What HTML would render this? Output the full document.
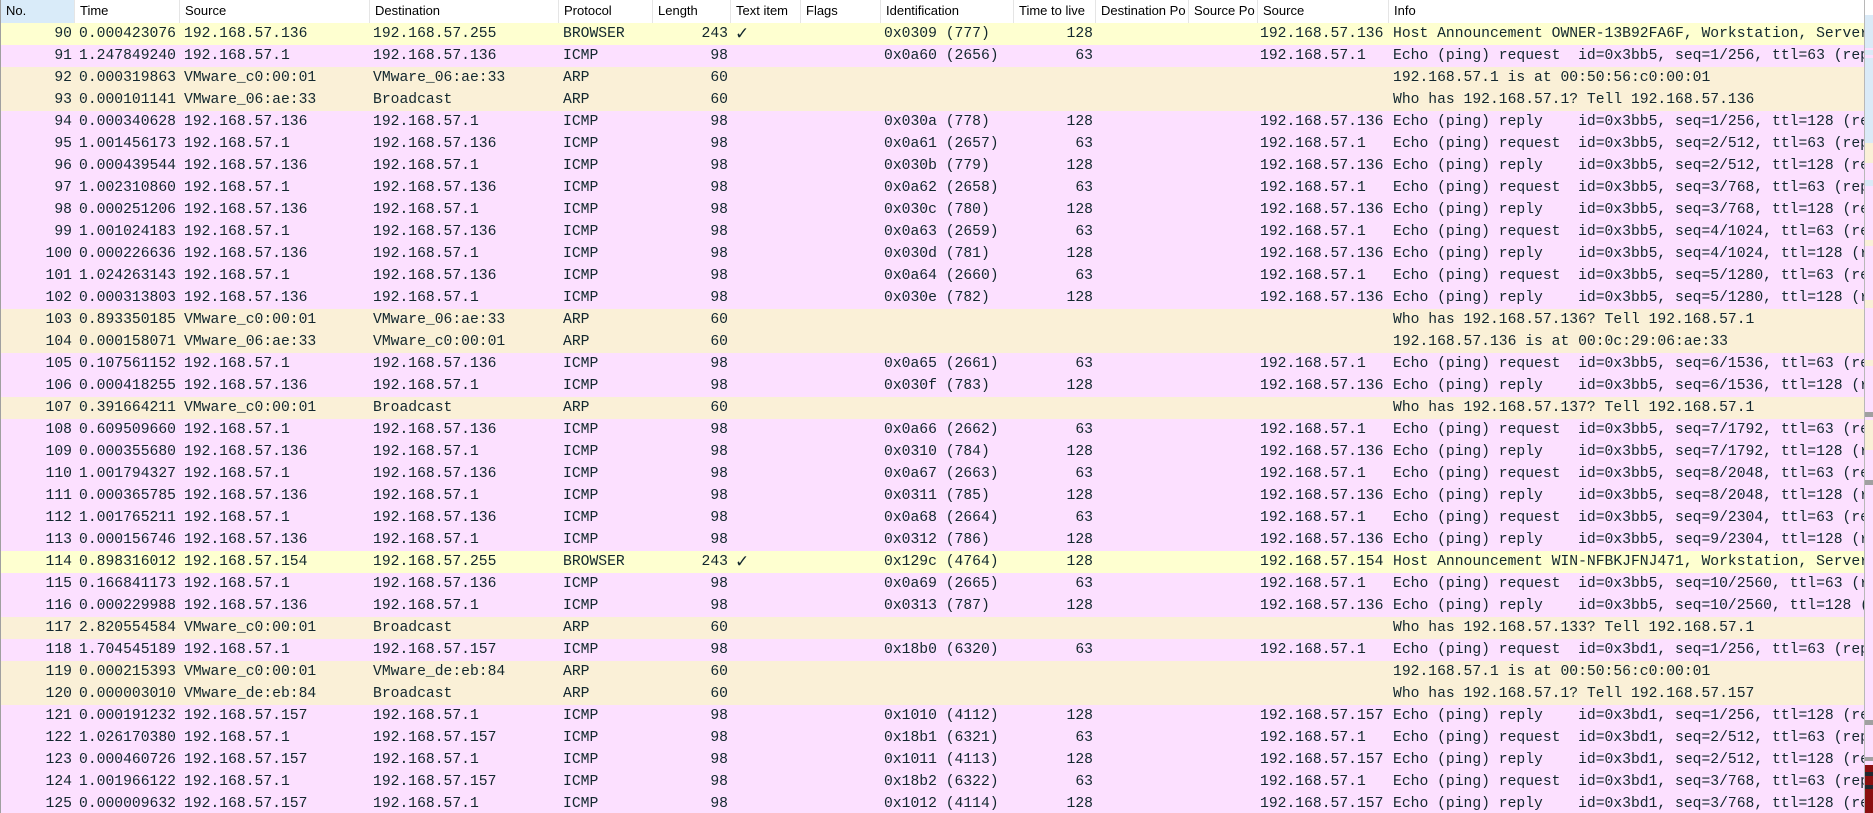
<!DOCTYPE html>
<html><head><meta charset="utf-8">
<style>
*{margin:0;padding:0;box-sizing:border-box}
body{width:1873px;height:813px;overflow:hidden;background:#fff;position:relative}
#list{position:absolute;left:0;top:0;width:1864px;height:813px;overflow:hidden;border-left:1px solid #a0a0a0}
.hd{position:absolute;left:0;top:0;height:23px;width:1873px;background:#fff;font-family:"Liberation Sans",sans-serif;font-size:13px;color:#000}
.hd span{position:absolute;top:0;height:23px;line-height:22px;padding-left:5px;border-left:1px solid #e5e5e5;white-space:nowrap;overflow:hidden}
.r{position:absolute;left:0;width:1864px;height:22px;font-family:"Liberation Mono",monospace;font-size:14.7px;line-height:22px;color:#12272e;white-space:pre}
.r span{position:absolute;top:0}
.Y{background:#feffd0}.I{background:#fce0ff}.A{background:#faf0d7}
.n{left:0;width:71px;text-align:right}
.t{left:78px}.s{left:183px}.d{left:372px}.p{left:562px}
.l{left:651px;width:76px;text-align:right}
.r .x{left:734px;font-family:"DejaVu Sans",sans-serif;font-size:17px}
.id{left:883px}
.tt{left:1012px;width:80px;text-align:right}
.s2{left:1259px}.in{left:1392px}
#sb{position:absolute;left:1864px;top:0;width:9px;height:813px;border-left:1px solid #b8b8b8;background:#fce0ff}
#sb div{position:absolute;left:0;width:8px}
</style></head><body>
<div id="list">
<div class="hd">
<span style="left:0;width:73px;background:#d9ebf9;border-left:none">No.</span>
<span style="left:73px;width:105px">Time</span>
<span style="left:178px;width:190px">Source</span>
<span style="left:368px;width:189px">Destination</span>
<span style="left:557px;width:94px">Protocol</span>
<span style="left:651px;width:78px">Length</span>
<span style="left:729px;width:70px">Text item</span>
<span style="left:799px;width:80px">Flags</span>
<span style="left:879px;width:133px">Identification</span>
<span style="left:1012px;width:82px">Time to live</span>
<span style="left:1094px;width:93px">Destination Po</span>
<span style="left:1187px;width:69px">Source Po</span>
<span style="left:1256px;width:131px">Source</span>
<span style="left:1387px;width:480px">Info</span>
</div>

<div class="r Y" style="top:23px"><span class="n">90</span><span class="t">0.000423076</span><span class="s">192.168.57.136</span><span class="d">192.168.57.255</span><span class="p">BROWSER</span><span class="l">243</span><span class="x">✓</span><span class="id">0x0309 (777)</span><span class="tt">128</span><span class="s2">192.168.57.136</span><span class="in">Host Announcement OWNER-13B92FA6F, Workstation, Server, Print Queue</span></div>
<div class="r I" style="top:45px"><span class="n">91</span><span class="t">1.247849240</span><span class="s">192.168.57.1</span><span class="d">192.168.57.136</span><span class="p">ICMP</span><span class="l">98</span><span class="id">0x0a60 (2656)</span><span class="tt">63</span><span class="s2">192.168.57.1</span><span class="in">Echo (ping) request  id=0x3bb5, seq=1/256, ttl=63 (reply in 94)</span></div>
<div class="r A" style="top:67px"><span class="n">92</span><span class="t">0.000319863</span><span class="s">VMware_c0:00:01</span><span class="d">VMware_06:ae:33</span><span class="p">ARP</span><span class="l">60</span><span class="in">192.168.57.1 is at 00:50:56:c0:00:01</span></div>
<div class="r A" style="top:89px"><span class="n">93</span><span class="t">0.000101141</span><span class="s">VMware_06:ae:33</span><span class="d">Broadcast</span><span class="p">ARP</span><span class="l">60</span><span class="in">Who has 192.168.57.1? Tell 192.168.57.136</span></div>
<div class="r I" style="top:111px"><span class="n">94</span><span class="t">0.000340628</span><span class="s">192.168.57.136</span><span class="d">192.168.57.1</span><span class="p">ICMP</span><span class="l">98</span><span class="id">0x030a (778)</span><span class="tt">128</span><span class="s2">192.168.57.136</span><span class="in">Echo (ping) reply    id=0x3bb5, seq=1/256, ttl=128 (request in 91)</span></div>
<div class="r I" style="top:133px"><span class="n">95</span><span class="t">1.001456173</span><span class="s">192.168.57.1</span><span class="d">192.168.57.136</span><span class="p">ICMP</span><span class="l">98</span><span class="id">0x0a61 (2657)</span><span class="tt">63</span><span class="s2">192.168.57.1</span><span class="in">Echo (ping) request  id=0x3bb5, seq=2/512, ttl=63 (reply in 96)</span></div>
<div class="r I" style="top:155px"><span class="n">96</span><span class="t">0.000439544</span><span class="s">192.168.57.136</span><span class="d">192.168.57.1</span><span class="p">ICMP</span><span class="l">98</span><span class="id">0x030b (779)</span><span class="tt">128</span><span class="s2">192.168.57.136</span><span class="in">Echo (ping) reply    id=0x3bb5, seq=2/512, ttl=128 (request in 95)</span></div>
<div class="r I" style="top:177px"><span class="n">97</span><span class="t">1.002310860</span><span class="s">192.168.57.1</span><span class="d">192.168.57.136</span><span class="p">ICMP</span><span class="l">98</span><span class="id">0x0a62 (2658)</span><span class="tt">63</span><span class="s2">192.168.57.1</span><span class="in">Echo (ping) request  id=0x3bb5, seq=3/768, ttl=63 (reply in 98)</span></div>
<div class="r I" style="top:199px"><span class="n">98</span><span class="t">0.000251206</span><span class="s">192.168.57.136</span><span class="d">192.168.57.1</span><span class="p">ICMP</span><span class="l">98</span><span class="id">0x030c (780)</span><span class="tt">128</span><span class="s2">192.168.57.136</span><span class="in">Echo (ping) reply    id=0x3bb5, seq=3/768, ttl=128 (request in 97)</span></div>
<div class="r I" style="top:221px"><span class="n">99</span><span class="t">1.001024183</span><span class="s">192.168.57.1</span><span class="d">192.168.57.136</span><span class="p">ICMP</span><span class="l">98</span><span class="id">0x0a63 (2659)</span><span class="tt">63</span><span class="s2">192.168.57.1</span><span class="in">Echo (ping) request  id=0x3bb5, seq=4/1024, ttl=63 (reply in 100)</span></div>
<div class="r I" style="top:243px"><span class="n">100</span><span class="t">0.000226636</span><span class="s">192.168.57.136</span><span class="d">192.168.57.1</span><span class="p">ICMP</span><span class="l">98</span><span class="id">0x030d (781)</span><span class="tt">128</span><span class="s2">192.168.57.136</span><span class="in">Echo (ping) reply    id=0x3bb5, seq=4/1024, ttl=128 (request in 99)</span></div>
<div class="r I" style="top:265px"><span class="n">101</span><span class="t">1.024263143</span><span class="s">192.168.57.1</span><span class="d">192.168.57.136</span><span class="p">ICMP</span><span class="l">98</span><span class="id">0x0a64 (2660)</span><span class="tt">63</span><span class="s2">192.168.57.1</span><span class="in">Echo (ping) request  id=0x3bb5, seq=5/1280, ttl=63 (reply in 102)</span></div>
<div class="r I" style="top:287px"><span class="n">102</span><span class="t">0.000313803</span><span class="s">192.168.57.136</span><span class="d">192.168.57.1</span><span class="p">ICMP</span><span class="l">98</span><span class="id">0x030e (782)</span><span class="tt">128</span><span class="s2">192.168.57.136</span><span class="in">Echo (ping) reply    id=0x3bb5, seq=5/1280, ttl=128 (request in 101)</span></div>
<div class="r A" style="top:309px"><span class="n">103</span><span class="t">0.893350185</span><span class="s">VMware_c0:00:01</span><span class="d">VMware_06:ae:33</span><span class="p">ARP</span><span class="l">60</span><span class="in">Who has 192.168.57.136? Tell 192.168.57.1</span></div>
<div class="r A" style="top:331px"><span class="n">104</span><span class="t">0.000158071</span><span class="s">VMware_06:ae:33</span><span class="d">VMware_c0:00:01</span><span class="p">ARP</span><span class="l">60</span><span class="in">192.168.57.136 is at 00:0c:29:06:ae:33</span></div>
<div class="r I" style="top:353px"><span class="n">105</span><span class="t">0.107561152</span><span class="s">192.168.57.1</span><span class="d">192.168.57.136</span><span class="p">ICMP</span><span class="l">98</span><span class="id">0x0a65 (2661)</span><span class="tt">63</span><span class="s2">192.168.57.1</span><span class="in">Echo (ping) request  id=0x3bb5, seq=6/1536, ttl=63 (reply in 106)</span></div>
<div class="r I" style="top:375px"><span class="n">106</span><span class="t">0.000418255</span><span class="s">192.168.57.136</span><span class="d">192.168.57.1</span><span class="p">ICMP</span><span class="l">98</span><span class="id">0x030f (783)</span><span class="tt">128</span><span class="s2">192.168.57.136</span><span class="in">Echo (ping) reply    id=0x3bb5, seq=6/1536, ttl=128 (request in 105)</span></div>
<div class="r A" style="top:397px"><span class="n">107</span><span class="t">0.391664211</span><span class="s">VMware_c0:00:01</span><span class="d">Broadcast</span><span class="p">ARP</span><span class="l">60</span><span class="in">Who has 192.168.57.137? Tell 192.168.57.1</span></div>
<div class="r I" style="top:419px"><span class="n">108</span><span class="t">0.609509660</span><span class="s">192.168.57.1</span><span class="d">192.168.57.136</span><span class="p">ICMP</span><span class="l">98</span><span class="id">0x0a66 (2662)</span><span class="tt">63</span><span class="s2">192.168.57.1</span><span class="in">Echo (ping) request  id=0x3bb5, seq=7/1792, ttl=63 (reply in 109)</span></div>
<div class="r I" style="top:441px"><span class="n">109</span><span class="t">0.000355680</span><span class="s">192.168.57.136</span><span class="d">192.168.57.1</span><span class="p">ICMP</span><span class="l">98</span><span class="id">0x0310 (784)</span><span class="tt">128</span><span class="s2">192.168.57.136</span><span class="in">Echo (ping) reply    id=0x3bb5, seq=7/1792, ttl=128 (request in 108)</span></div>
<div class="r I" style="top:463px"><span class="n">110</span><span class="t">1.001794327</span><span class="s">192.168.57.1</span><span class="d">192.168.57.136</span><span class="p">ICMP</span><span class="l">98</span><span class="id">0x0a67 (2663)</span><span class="tt">63</span><span class="s2">192.168.57.1</span><span class="in">Echo (ping) request  id=0x3bb5, seq=8/2048, ttl=63 (reply in 111)</span></div>
<div class="r I" style="top:485px"><span class="n">111</span><span class="t">0.000365785</span><span class="s">192.168.57.136</span><span class="d">192.168.57.1</span><span class="p">ICMP</span><span class="l">98</span><span class="id">0x0311 (785)</span><span class="tt">128</span><span class="s2">192.168.57.136</span><span class="in">Echo (ping) reply    id=0x3bb5, seq=8/2048, ttl=128 (request in 110)</span></div>
<div class="r I" style="top:507px"><span class="n">112</span><span class="t">1.001765211</span><span class="s">192.168.57.1</span><span class="d">192.168.57.136</span><span class="p">ICMP</span><span class="l">98</span><span class="id">0x0a68 (2664)</span><span class="tt">63</span><span class="s2">192.168.57.1</span><span class="in">Echo (ping) request  id=0x3bb5, seq=9/2304, ttl=63 (reply in 113)</span></div>
<div class="r I" style="top:529px"><span class="n">113</span><span class="t">0.000156746</span><span class="s">192.168.57.136</span><span class="d">192.168.57.1</span><span class="p">ICMP</span><span class="l">98</span><span class="id">0x0312 (786)</span><span class="tt">128</span><span class="s2">192.168.57.136</span><span class="in">Echo (ping) reply    id=0x3bb5, seq=9/2304, ttl=128 (request in 112)</span></div>
<div class="r Y" style="top:551px"><span class="n">114</span><span class="t">0.898316012</span><span class="s">192.168.57.154</span><span class="d">192.168.57.255</span><span class="p">BROWSER</span><span class="l">243</span><span class="x">✓</span><span class="id">0x129c (4764)</span><span class="tt">128</span><span class="s2">192.168.57.154</span><span class="in">Host Announcement WIN-NFBKJFNJ471, Workstation, Server, NT Workstation</span></div>
<div class="r I" style="top:573px"><span class="n">115</span><span class="t">0.166841173</span><span class="s">192.168.57.1</span><span class="d">192.168.57.136</span><span class="p">ICMP</span><span class="l">98</span><span class="id">0x0a69 (2665)</span><span class="tt">63</span><span class="s2">192.168.57.1</span><span class="in">Echo (ping) request  id=0x3bb5, seq=10/2560, ttl=63 (reply in 116)</span></div>
<div class="r I" style="top:595px"><span class="n">116</span><span class="t">0.000229988</span><span class="s">192.168.57.136</span><span class="d">192.168.57.1</span><span class="p">ICMP</span><span class="l">98</span><span class="id">0x0313 (787)</span><span class="tt">128</span><span class="s2">192.168.57.136</span><span class="in">Echo (ping) reply    id=0x3bb5, seq=10/2560, ttl=128 (request in 115)</span></div>
<div class="r A" style="top:617px"><span class="n">117</span><span class="t">2.820554584</span><span class="s">VMware_c0:00:01</span><span class="d">Broadcast</span><span class="p">ARP</span><span class="l">60</span><span class="in">Who has 192.168.57.133? Tell 192.168.57.1</span></div>
<div class="r I" style="top:639px"><span class="n">118</span><span class="t">1.704545189</span><span class="s">192.168.57.1</span><span class="d">192.168.57.157</span><span class="p">ICMP</span><span class="l">98</span><span class="id">0x18b0 (6320)</span><span class="tt">63</span><span class="s2">192.168.57.1</span><span class="in">Echo (ping) request  id=0x3bd1, seq=1/256, ttl=63 (reply in 121)</span></div>
<div class="r A" style="top:661px"><span class="n">119</span><span class="t">0.000215393</span><span class="s">VMware_c0:00:01</span><span class="d">VMware_de:eb:84</span><span class="p">ARP</span><span class="l">60</span><span class="in">192.168.57.1 is at 00:50:56:c0:00:01</span></div>
<div class="r A" style="top:683px"><span class="n">120</span><span class="t">0.000003010</span><span class="s">VMware_de:eb:84</span><span class="d">Broadcast</span><span class="p">ARP</span><span class="l">60</span><span class="in">Who has 192.168.57.1? Tell 192.168.57.157</span></div>
<div class="r I" style="top:705px"><span class="n">121</span><span class="t">0.000191232</span><span class="s">192.168.57.157</span><span class="d">192.168.57.1</span><span class="p">ICMP</span><span class="l">98</span><span class="id">0x1010 (4112)</span><span class="tt">128</span><span class="s2">192.168.57.157</span><span class="in">Echo (ping) reply    id=0x3bd1, seq=1/256, ttl=128 (request in 118)</span></div>
<div class="r I" style="top:727px"><span class="n">122</span><span class="t">1.026170380</span><span class="s">192.168.57.1</span><span class="d">192.168.57.157</span><span class="p">ICMP</span><span class="l">98</span><span class="id">0x18b1 (6321)</span><span class="tt">63</span><span class="s2">192.168.57.1</span><span class="in">Echo (ping) request  id=0x3bd1, seq=2/512, ttl=63 (reply in 123)</span></div>
<div class="r I" style="top:749px"><span class="n">123</span><span class="t">0.000460726</span><span class="s">192.168.57.157</span><span class="d">192.168.57.1</span><span class="p">ICMP</span><span class="l">98</span><span class="id">0x1011 (4113)</span><span class="tt">128</span><span class="s2">192.168.57.157</span><span class="in">Echo (ping) reply    id=0x3bd1, seq=2/512, ttl=128 (request in 122)</span></div>
<div class="r I" style="top:771px"><span class="n">124</span><span class="t">1.001966122</span><span class="s">192.168.57.1</span><span class="d">192.168.57.157</span><span class="p">ICMP</span><span class="l">98</span><span class="id">0x18b2 (6322)</span><span class="tt">63</span><span class="s2">192.168.57.1</span><span class="in">Echo (ping) request  id=0x3bd1, seq=3/768, ttl=63 (reply in 125)</span></div>
<div class="r I" style="top:793px"><span class="n">125</span><span class="t">0.000009632</span><span class="s">192.168.57.157</span><span class="d">192.168.57.1</span><span class="p">ICMP</span><span class="l">98</span><span class="id">0x1012 (4114)</span><span class="tt">128</span><span class="s2">192.168.57.157</span><span class="in">Echo (ping) reply    id=0x3bd1, seq=3/768, ttl=128 (request in 124)</span></div>
</div>
<div id="sb">
<div style="top:0;height:15px;background:#fff"></div>
<div style="top:15px;height:128px;background:#daeaf7"></div>
<div style="top:48px;height:2px;background:#fce0ff"></div>
<div style="top:55px;height:3px;background:#fce0ff"></div>
<div style="top:143px;height:20px;background:#faf0d7"></div>
<div style="top:180px;height:6px;background:#daeaf7"></div>
<div style="top:240px;height:6px;background:#faf0d7"></div>
<div style="top:300px;height:8px;background:#faf0d7"></div>
<div style="top:360px;height:6px;background:#faf0d7"></div>
<div style="top:412px;height:5px;background:#a0a0a0"></div>
<div style="top:420px;height:30px;background:#faf0d7"></div>
<div style="top:480px;height:5px;background:#a0a0a0"></div>
<div style="top:720px;height:5px;background:#a0a0a0"></div>
<div style="top:757px;height:4px;background:#a0a0a0"></div>
<div style="top:765px;height:48px;background:#8b1010"></div>
<div style="top:772px;height:4px;background:#202830"></div>
<div style="top:785px;height:4px;background:#202830"></div>
</div>
</body></html>
